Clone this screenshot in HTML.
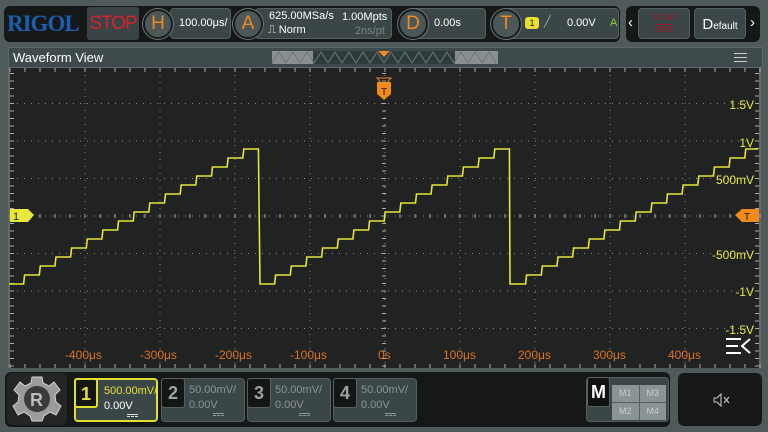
<!DOCTYPE html>
<html><head><meta charset="utf-8"><style>
*{margin:0;padding:0;box-sizing:border-box}
body{width:768px;height:432px;background:#4f5a5b;position:relative;overflow:hidden;font-family:"Liberation Sans",sans-serif}
.a{position:absolute}
.blk{background:#161818;border-radius:6px}
.box{background:#3b4648;border:1px solid #56605f;border-radius:4px}
.circ{position:absolute;width:30px;height:30px;border-radius:50%;background:#4c5758;border:2px solid #1a1c1c;box-shadow:0 0 0 1px #6a7474;color:#f08a1c;font-size:19px;text-align:center;line-height:26px}
.t{color:#fff;font-size:11px;position:absolute;white-space:nowrap}
.yl{color:#e8e84a;font-size:12px;position:absolute;white-space:nowrap;text-align:right}
.xl{color:#d9742a;font-size:12px;position:absolute;white-space:nowrap}
.ch{position:absolute;top:378px;width:84px;height:44px;background:#3b4648;border:1px solid #55605f;border-radius:4px}
.ch .n{position:absolute;left:-1px;top:-1px;width:24px;height:30px;background:#141616;border:1px solid #55605f;border-radius:3px;color:#9aa4a6;font-size:18px;font-weight:bold;text-align:center;line-height:28px}
.ch .v{position:absolute;left:27px;top:4px;color:#8c9698;font-size:11px;line-height:15px}
.ch .d{position:absolute;left:51px;top:34px;width:11px;border-top:1px solid #8c9698;border-bottom:1px dashed #8c9698;height:3px}
</style></head><body>
<div class="a blk" style="left:4px;top:6px;width:616px;height:36px;background:#161818"></div>
<div class="a" style="left:7px;top:9px;font-family:'Liberation Serif',serif;font-weight:bold;font-size:23px;color:#1b5fae;letter-spacing:-1px;line-height:30px">RIGOL</div>
<div class="a" style="left:87px;top:7px;width:52px;height:33px;background:#3a4446;border-radius:3px;color:#d8202a;font-size:19px;text-align:center;line-height:33px;letter-spacing:-1px">STOP</div>
<div class="a box" style="left:170px;top:8px;width:61px;height:31px"></div>
<div class="circ" style="left:143px;top:9px">H</div>
<div class="t" style="left:179px;top:17px">100.00μs/</div>
<div class="a box" style="left:255px;top:8px;width:137px;height:31px"></div>
<div class="circ" style="left:233px;top:9px">A</div>
<div class="t" style="left:269px;top:10px">625.00MSa/s</div>
<div class="t" style="left:342px;top:11px">1.00Mpts</div>
<div class="t" style="left:268px;top:24px;font-size:11px">⎍ Norm</div>
<div class="t" style="left:355px;top:25px;color:#7c8688">2ns/pt</div>
<div class="a box" style="left:410px;top:8px;width:76px;height:31px"></div>
<div class="circ" style="left:398px;top:9px">D</div>
<div class="t" style="left:434px;top:17px">0.00s</div>
<div class="a box" style="left:503px;top:8px;width:116px;height:31px"></div>
<div class="circ" style="left:491px;top:9px">T</div>
<div class="a" style="left:525px;top:17px;width:14px;height:12px;background:#e8e030;border-radius:3px;font-size:9px;text-align:center;line-height:12px;color:#222">1</div>
<div class="t" style="left:544px;top:15px;color:#aaa">╱</div>
<div class="t" style="left:567px;top:17px">0.00V</div>
<div class="t" style="left:610px;top:17px;color:#8ed23a">A</div>
<div class="a blk" style="left:626px;top:6px;width:134px;height:36px"></div>
<div class="t" style="left:628px;top:14px;font-size:15px">‹</div>
<div class="a box" style="left:638px;top:8px;width:52px;height:31px;text-align:center;color:#9a1828;font-size:8px;line-height:12px;padding-top:3px">STOP<br><span style="border-top:1px solid #9a1828">RUN</span></div>
<div class="a box" style="left:694px;top:8px;width:52px;height:31px;color:#fff;font-size:10px;text-align:center;line-height:31px"><span style="font-size:15px">D</span>efault</div>
<div class="t" style="left:750px;top:14px;font-size:15px">›</div>
<div class="a" style="left:8px;top:47px;width:755px;height:21px;background:#3e4a4b;border:1px solid #5e6868"></div>
<div class="t" style="left:13px;top:50px;font-size:13px">Waveform View</div>
<svg class="a" style="left:272px;top:51px" width="226" height="13">
<rect width="226" height="13" fill="#2e3a3b"/><rect width="41" height="13" fill="#8a8f90"/><rect x="183" width="43" height="13" fill="#8a8f90"/>
<path d="M0 12 L7 1 L14 12 L21 1 L28 12 L35 1 L42 12 L49 1 L56 12 L63 1 L70 12 L77 1 L84 12 L91 1 L98 12 L105 1 L112 12 L119 1 L126 12 L133 1 L140 12 L147 1 L154 12 L161 1 L168 12 L175 1 L182 12 L189 1 L196 12 L203 1 L210 12 L217 1 L224 12" stroke="#6e7878" fill="none"/>
<path d="M106 0 L118 0 L112 6Z" fill="#f08a1c"/></svg>
<div class="a" style="left:734px;top:53px;width:13px;height:9px;border-top:1px solid #ccc;border-bottom:1px solid #ccc"></div>
<div class="a" style="left:734px;top:57px;width:13px;height:1px;background:#ccc"></div>
<svg class="a" style="left:0;top:68px" width="768" height="302" id="g">
<rect x="9" y="0" width="751" height="300" fill="#212222"/>
<rect x="8" y="0" width="2" height="300" fill="#666"/><rect x="759" y="0" width="2" height="300" fill="#666"/>
<g id="gl" stroke="#8a8a8a" stroke-width="1" stroke-dasharray="1 6"></g>
<g id="tk" stroke="#aaa" stroke-width="1"></g>
<path id="w" fill="none" stroke="#e4e43a" stroke-width="1.6"/>
<path d="M377 10 L391 10 L384 18Z" fill="none" stroke="#f08a1c"/>
<path d="M377 14 L391 14 L391 26 L384 32 L377 26Z" fill="#f08a1c"/>
<text x="384" y="27" font-size="10" text-anchor="middle" fill="#222" font-family="Liberation Sans">T</text>
<path d="M10 141 L28 141 L34 147 L28 154 L10 154Z" fill="#e8e83a"/>
<text x="13" y="152" font-size="11" fill="#222" font-family="Liberation Sans">1</text>
<path d="M759 141 L742 141 L735 147 L742 154 L759 154Z" fill="#f08a1c"/>
<text x="744" y="152" font-size="10" fill="#222" font-family="Liberation Sans">T</text>
<g stroke="#fff" stroke-width="2"><path d="M726 271 L741 271 M726 278 L738 278 M726 285 L741 285 M750 271 L742 278 L750 285" fill="none"/></g>
</svg>
<div class="yl" style="left:690px;top:98px;width:64px">1.5V</div>
<div class="yl" style="left:690px;top:136px;width:64px">1V</div>
<div class="yl" style="left:690px;top:173px;width:64px">500mV</div>
<div class="yl" style="left:690px;top:248px;width:64px">-500mV</div>
<div class="yl" style="left:690px;top:285px;width:64px">-1V</div>
<div class="yl" style="left:690px;top:323px;width:64px">-1.5V</div>
<div class="xl" style="left:65px;top:348px">-400μs</div>
<div class="xl" style="left:140px;top:348px">-300μs</div>
<div class="xl" style="left:215px;top:348px">-200μs</div>
<div class="xl" style="left:290px;top:348px">-100μs</div>
<div class="xl" style="left:378px;top:348px">0s</div>
<div class="xl" style="left:443px;top:348px">100μs</div>
<div class="xl" style="left:518px;top:348px">200μs</div>
<div class="xl" style="left:593px;top:348px">300μs</div>
<div class="xl" style="left:668px;top:348px">400μs</div>
<div class="a blk" style="left:5px;top:372px;width:665px;height:55px"></div>
<div class="a" style="left:7px;top:373px;width:60px;height:52px;background:#242626;border-radius:6px"></div>
<svg class="a" style="left:10px;top:374px" width="54" height="50"><g transform="translate(27,25)">
<path d="M-5 -22 L5 -22 L6 -16 L12 -13 L17 -17 L23 -9 L18 -4 L19 3 L24 7 L19 16 L13 13 L7 17 L5 22 L-5 22 L-7 17 L-13 13 L-19 16 L-24 7 L-19 3 L-18 -4 L-23 -9 L-17 -17 L-12 -13 L-6 -16Z" fill="#9a9c9c" stroke="#d0d0d0"/>
<circle r="13" fill="#3a3c3c"/><text x="-7" y="7" font-size="18" font-weight="bold" fill="#bbb" font-family="Liberation Sans">R</text></g></svg>
<div class="ch" style="left:74px;border:2px solid #e0e030"><div class="n" style="color:#e8e03a;border:2px solid #e0e030;left:-2px;top:-2px">1</div><div class="v" style="left:28px"><span style="color:#e8e03a">500.00mV/</span><br><span style="color:#fff">0.00V</span></div><div class="d" style="border-color:#ddd"></div></div>
<div class="ch" style="left:161px"><div class="n">2</div><div class="v">50.00mV/<br>0.00V</div><div class="d"></div></div>
<div class="ch" style="left:247px"><div class="n">3</div><div class="v">50.00mV/<br>0.00V</div><div class="d"></div></div>
<div class="ch" style="left:333px"><div class="n">4</div><div class="v">50.00mV/<br>0.00V</div><div class="d"></div></div>
<div class="a" style="left:586px;top:377px;width:83px;height:45px;background:#3b4648;border:1px solid #55605f;border-radius:4px"></div>
<div class="a" style="left:587px;top:377px;width:23px;height:30px;background:#111;border:1px solid #55605f;color:#fff;font-weight:bold;font-size:18px;text-align:center;line-height:28px;border-radius:3px">M</div>
<div class="a" style="left:612px;top:385px;width:54px;height:35px;display:grid;grid-template-columns:1fr 1fr;gap:1px;background:#55605f">
<div style="background:#8a9496;color:#c8ced0;font-size:9px;text-align:center;line-height:17px">M1</div><div style="background:#8a9496;color:#c8ced0;font-size:9px;text-align:center;line-height:17px">M3</div><div style="background:#8a9496;color:#c8ced0;font-size:9px;text-align:center;line-height:17px">M2</div><div style="background:#8a9496;color:#c8ced0;font-size:9px;text-align:center;line-height:17px">M4</div></div>
<div class="a blk" style="left:678px;top:373px;width:84px;height:53px"></div>
<svg class="a" style="left:713px;top:393px" width="18" height="14"><path d="M1 5 L4 5 L8 1 L8 13 L4 9 L1 9Z" fill="none" stroke="#ccc"/><path d="M11 4 L16 10 M16 4 L11 10" stroke="#ccc"/></svg>
<script>
(function(){
var gl=document.getElementById('gl'),tk=document.getElementById('tk'),s='',t='';
for(var i=1;i<10;i++){var x=10+75*i;s+='<line x1="'+x+'" y1="0" x2="'+x+'" y2="300"/>';}
for(var j=1;j<8;j++){var y=37.5*j-2;s+='<line x1="10" y1="'+y+'" x2="759" y2="'+y+'"/>';}
gl.innerHTML=s;
for(var x=10;x<=760;x+=15){t+='<line x1="'+x+'" y1="0" x2="'+x+'" y2="4"/><line x1="'+x+'" y1="296" x2="'+x+'" y2="300"/><line x1="'+x+'" y1="146" x2="'+x+'" y2="150"/>';}
for(var y=-2;y<=300;y+=7.5){t+='<line x1="10" y1="'+y+'" x2="14" y2="'+y+'"/><line x1="755" y1="'+y+'" x2="759" y2="'+y+'"/><line x1="382" y1="'+y+'" x2="386" y2="'+y+'"/>';}
tk.innerHTML=t;
var d='',ty=149-68,step=9,w=15.65;
function ramp(x0,first){for(var k=0;k<16;k++){var y=ty+(15-k)*step,xa=x0+k*w,xb=xa+w;if(xb>759)xb=759;if(xa>759)return;d+=(first&&k==0?'M':'L')+xa.toFixed(1)+' '+y+' L'+(xb-1).toFixed(1)+' '+y+' ';}}
ramp(9,true);d+='L260 '+(ty+135)+' ';ramp(260,false);d+='L510 '+(ty+135)+' ';ramp(511,false);
document.getElementById('w').setAttribute('d',d);
})();
</script>
</body></html>
